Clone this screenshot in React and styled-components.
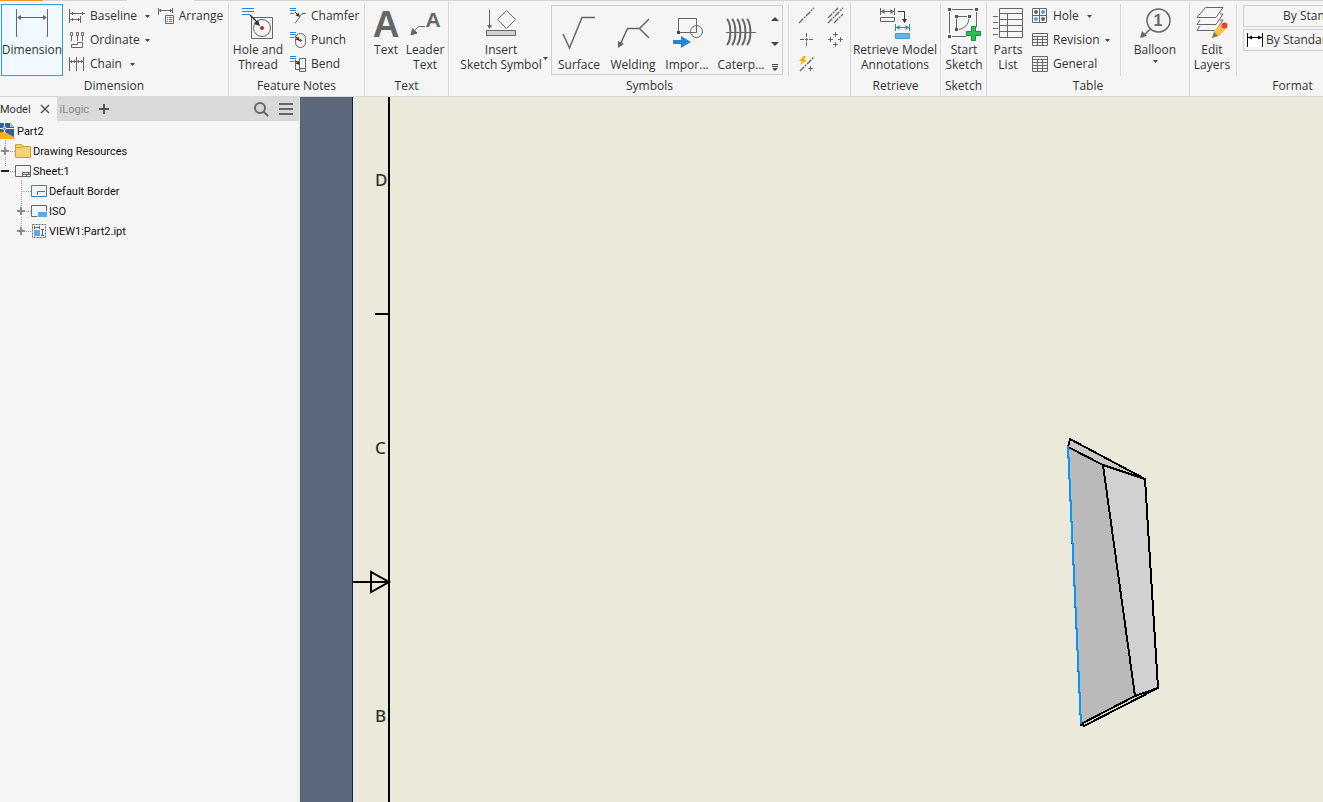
import styled, { createGlobalStyle } from 'styled-components'

function App() {
    return (
        <Window>
            <GlobalStyle />
            <TopStrip><i /><b /></TopStrip>
            <Ribbon />
            <Main>
                <Browser />
                <Workspace>
                    <Sheet />
                </Workspace>
            </Main>
        </Window>
    )
}

function Ribbon() {
    return (
        <RibbonBar>
            <Panel $w={229}>
                <PanelBody $left={1}>
                    <BigButton $w={62} $active>
                        <DimensionIcon />
                        <span>Dimension</span>
                    </BigButton>
                    <Column $left={6}>
                        <SmallButton><BaselineIcon /><span>Baseline</span><Caret /></SmallButton>
                        <SmallButton><OrdinateIcon /><span>Ordinate</span><Caret /></SmallButton>
                        <SmallButton $fit><ChainIcon /><span>Chain</span><Caret /></SmallButton>
                    </Column>
                    <Column $left={8}>
                        <SmallButton><ArrangeIcon /><span>Arrange</span></SmallButton>
                    </Column>
                </PanelBody>
                <PanelTitle>Dimension</PanelTitle>
            </Panel>

            <Panel $w={136}>
                <PanelBody>
                    <BigButton $w={58}>
                        <HoleThreadIcon />
                        <span>Hole and<br />Thread</span>
                    </BigButton>
                    <Column $left={3}>
                        <SmallButton><ChamferIcon /><span>Chamfer</span></SmallButton>
                        <SmallButton><PunchIcon /><span>Punch</span></SmallButton>
                        <SmallButton><BendIcon /><span>Bend</span></SmallButton>
                    </Column>
                </PanelBody>
                <PanelTitle>Feature Notes</PanelTitle>
            </Panel>

            <Panel $w={84}>
                <PanelBody>
                    <BigButton $w={42}>
                        <TextIcon />
                        <span>Text</span>
                    </BigButton>
                    <BigButton $w={36}>
                        <LeaderIcon />
                        <span>Leader<br />Text</span>
                    </BigButton>
                </PanelBody>
                <PanelTitle>Text</PanelTitle>
            </Panel>

            <Panel $w={402}>
                <PanelBody>
                    <SplitButton>
                        <BigButton as="span" $w={80}>
                            <SketchSymbolIcon />
                            <span>Insert<br />Sketch Symbol</span>
                        </BigButton>
                        <Caret />
                    </SplitButton>
                    <Gallery>
                        <GalleryItem><SurfaceIcon /><span>Surface</span></GalleryItem>
                        <GalleryItem><WeldingIcon /><span>Welding</span></GalleryItem>
                        <GalleryItem><ImportIcon /><span>Impor...</span></GalleryItem>
                        <GalleryItem><CaterpillarIcon /><span>Caterp...</span></GalleryItem>
                        <GalleryScroll>
                            <button aria-label="Scroll up"><ScrollCaret viewBox="0 0 8 8"><path d="M0 6h8l-4-4z" /></ScrollCaret></button>
                            <button aria-label="Scroll down"><ScrollCaret viewBox="0 0 8 8"><path d="M0 2h8l-4 4z" /></ScrollCaret></button>
                            <button aria-label="More symbols"><ScrollCaret viewBox="0 0 8 8"><path d="M1 0h6v1H1zM1 2h6v1H1zM1 4h6l-3 3z" /></ScrollCaret></button>
                        </GalleryScroll>
                    </Gallery>
                    <Divider $left={5} />
                    <MarkGrid>
                        <button aria-label="Centerline"><Icon16 viewBox="0 0 16 16"><path d="M0 15 15 0" strokeDasharray="6 1 2 1" strokeWidth="1.3" /></Icon16></button>
                        <button aria-label="Centerline bisector"><Icon16 viewBox="0 0 16 16"><path d="M0 10 10 0M0 15 15 0M6 15 15 6" strokeDasharray="6 1 2 1" strokeWidth="1.3" /></Icon16></button>
                        <button aria-label="Center mark"><Icon16 viewBox="0 0 16 16"><path d="M1 7.5h4M6 7.5h3M10 7.5h4M7.5 1v4M7.5 6v3M7.5 10v4" /></Icon16></button>
                        <button aria-label="Centered pattern"><Icon16 viewBox="0 0 16 16"><path d="M5 2.5h5M7.5 0v5M0 7.5h5M2.5 5v5M10 7.5h5M12.5 5v5M5 12.5h5M7.5 10v5" /></Icon16></button>
                        <button aria-label="Automated centerlines">
                            <Icon16 viewBox="0 0 16 16">
                                <path d="M1 15 15 1" strokeDasharray="6 1 2 1" strokeWidth="1.3" />
                                <path d="M9 12.5h5M11.5 10v5" />
                                <path d="M5 0 0 5h3L1 9 8 4H5L7 0z" fill="#ffa41c" stroke="none" />
                            </Icon16>
                        </button>
                    </MarkGrid>
                </PanelBody>
                <PanelTitle>Symbols</PanelTitle>
            </Panel>

            <Panel $w={90}>
                <PanelBody>
                    <BigButton $w={88}>
                        <RetrieveIcon />
                        <span>Retrieve Model<br />Annotations</span>
                    </BigButton>
                </PanelBody>
                <PanelTitle>Retrieve</PanelTitle>
            </Panel>

            <Panel $w={46}>
                <PanelBody>
                    <BigButton $w={46}>
                        <SketchIcon />
                        <span>Start<br />Sketch</span>
                    </BigButton>
                </PanelBody>
                <PanelTitle>Sketch</PanelTitle>
            </Panel>

            <Panel $w={203}>
                <PanelBody>
                    <BigButton $w={42}>
                        <PartsListIcon />
                        <span>Parts<br />List</span>
                    </BigButton>
                    <Column $left={3}>
                        <SmallButton $fit><HoleTableIcon /><span>Hole</span><Caret /></SmallButton>
                        <SmallButton><RevisionIcon /><span>Revision</span><Caret /></SmallButton>
                        <SmallButton><GeneralIcon /><span>General</span></SmallButton>
                    </Column>
                    <Divider $auto />
                    <BigButton $w={68}>
                        <BalloonIcon />
                        <span>Balloon</span>
                        <Caret />
                    </BigButton>
                </PanelBody>
                <PanelTitle>Table</PanelTitle>
            </Panel>

            <Panel $w={206}>
                <PanelBody>
                    <BigButton $w={44}>
                        <LayersIcon />
                        <span>Edit<br />Layers</span>
                    </BigButton>
                    <Divider $left={2} />
                    <Formats>
                        <Format $pad={39}>
                            <select aria-label="Layer format"><option>By Standard</option></select>
                        </Format>
                        <Format $pad={3}>
                            <StyleIcon />
                            <select aria-label="Dimension style"><option>By Standard</option></select>
                        </Format>
                    </Formats>
                </PanelBody>
                <PanelTitle>Format</PanelTitle>
            </Panel>
        </RibbonBar>
    )
}

function Browser() {
    return (
        <SideBar>
            <Tabs>
                <Tab $active>Model
                    <svg width="10" height="10" viewBox="0 0 10 10"><path d="m1 1 8 8M9 1 1 9" stroke="#555" strokeWidth="1.5" /></svg>
                </Tab>
                <Tab>iLogic</Tab>
                <IconButton aria-label="Add tab">
                    <svg width="10" height="10" viewBox="0 0 10 10"><path d="M0 5h10M5 0v10" stroke="#555" strokeWidth="2" /></svg>
                </IconButton>
                <TabTools>
                    <IconButton aria-label="Search">
                        <svg width="16" height="16" viewBox="0 0 16 16" fill="none" stroke="#666" strokeWidth="2"><circle cx="7" cy="7" r="5" /><path d="m10.500 10.500 4.500 4.500" /></svg>
                    </IconButton>
                    <IconButton aria-label="Menu">
                        <svg width="14" height="14" viewBox="0 0 14 14"><path d="M0 2h14M0 7h14M0 12h14" stroke="#666" strokeWidth="2" /></svg>
                    </IconButton>
                </TabTools>
            </Tabs>
            <Tree>
                <Row $root><PartIcon /><span>Part2</span></Row>
                <Row><Expander mark="plus" line="M5.500 0v20" /><FolderIcon /><span>Drawing Resources</span></Row>
                <Row><Expander mark="minus" line="M5.500 0v8" /><SheetIcon /><span>Sheet:1</span></Row>
                <Row $level={1}><Expander line="M5.500 0v20M5.500 10.500h4" /><BorderIcon /><span>Default Border</span></Row>
                <Row $level={1}><Expander mark="plus" line="M5.500 0v20" /><TitleBlockIcon /><span>ISO</span></Row>
                <Row $level={1}><Expander mark="plus" line="M5.500 0v6" /><ViewIcon /><span>VIEW1:Part2.ipt</span></Row>
            </Tree>
        </SideBar>
    )
}

function Expander({ mark, line }) {
    return (
        <svg width="15" height="20" viewBox="0 0 15 20" fill="none">
            <path d={line} stroke="#999" strokeDasharray="1 1" />
            <path d="M10 10.500h5" stroke="#999" strokeDasharray="1 1" />
            {mark && <path d="M1 5h8v10H1z" fill="#f5f5f5" />}
            {mark === 'plus' && <path d="M1 10h8M5 6v8" stroke="#8a8a8a" strokeWidth="2" />}
            {mark === 'minus' && <path d="M1 10h8" stroke="#222" strokeWidth="2" />}
        </svg>
    )
}

// Drawing sheet: zone border on the left and the projected view of the part
function Sheet() {
    return (
        <Paper>
            <svg width="100%" height="100%" fill="none" stroke="#000" strokeWidth="2">
                <line x1="36" y1="0" x2="36" y2="100%" />
                <path d="M22 217h14M0 485h36M18 475v20l18-10z" />
                <g fill="#333" stroke="none">
                    <text x="22" y="89">D</text>
                    <text x="22" y="357">C</text>
                    <text x="22" y="625">B</text>
                </g>
                <g strokeLinejoin="round" shapeRendering="crispEdges">
                    <path d="M715 350 717 342 792 382 750 368z" fill="#c9c9c9" />
                    <path d="M715 350 750 368 782 599 728 628z" fill="#bababa" />
                    <path d="M750 368 792 382 805 591 782 599z" fill="#d1d1d1" />
                    <path d="M728 627 782 599 805 591 731 629z" fill="#d1d1d1" />
                    <path d="M715 349 728 627" stroke="#0696ff" />
                </g>
            </svg>
        </Paper>
    )
}

/* ---------- icons ---------- */

const DimensionIcon = () => (
    <Icon32 viewBox="0 0 32 32">
        <path d="M.5 1v28M31.500 1v28M2 9.500h28" />
        <path d="M1 9.500 5 7v5zM31 9.500 27 7v5z" fill="#666" stroke="none" />
    </Icon32>
)

const BaselineIcon = () => (
    <Icon16 viewBox="0 0 16 16">
        <path d="M.5 1v14M1 5.500h15M1 11.500h11M11.500 8v7M3.500 4v3M3.500 10v3M13.500 4v3M9.500 10v3" />
    </Icon16>
)

const OrdinateIcon = () => (
    <Icon16 viewBox="0 0 16 16">
        <path d="M1.500.5h2v3h-2zM7.500.5h2v3h-2zM12.500.5h2v3h-2zM2.500 4v5M8.500 4v5M13.500 4v5M2.500 15.500v-3h6v-2h5v5z" />
    </Icon16>
)

const ChainIcon = () => (
    <Icon16 viewBox="0 0 16 16">
        <path d="M.5 1v14M7.500 1v14M14.500 1v14M1 5.500h13M2.500 4v3M5.500 4v3M9.500 4v3M12.500 4v3" />
    </Icon16>
)

const ArrangeIcon = () => (
    <Icon16 viewBox="0 0 16 16">
        <path d="M.5 0v7M14.500 0v5M1 2.500h13M2.500 1v3M12.500 1v3M7.500 7.500h8v8h-8z" />
        <path d="M9 9.500h1M11 9.500h3M9 11.500h1M11 11.500h3M9 13.500h1M11 13.500h3" stroke="#1e88e0" />
    </Icon16>
)

const HoleThreadIcon = () => (
    <Icon32 viewBox="0 0 32 32">
        <path d="M0 .5h12M0 3.500h12M0 6.500h8" stroke="#1e88e0" />
        <path d="M9.500 9.500h21v21h-21z" />
        <circle cx="20" cy="20" r="8.500" />
        <circle cx="20" cy="20" r="2" fill="#c62828" stroke="none" />
        <path d="m8 7 7 7" stroke="#333" strokeWidth="1.5" />
        <path d="m18 18-6-2 4-4z" fill="#333" stroke="none" />
    </Icon32>
)

const NoteLines = () => (
    <>
        <path d="M0 .5h6M0 2.500h6M0 5.500h4" stroke="#1e88e0" />
        <path d="m5 4 3 3" stroke="#333" />
        <path d="M10 9 5.500 7.500 8.500 4.500z" fill="#333" stroke="none" />
    </>
)

const ChamferIcon = () => (
    <Icon16 viewBox="0 0 16 16">
        <path d="M16 5.500h-4L5 15.500" />
        <NoteLines />
    </Icon16>
)

const PunchIcon = () => (
    <Icon16 viewBox="0 0 16 16">
        <rect x="5.500" y="1.500" width="10" height="14" rx="5" />
        <path d="M9 8.500h3M10.500 7v3" stroke="#e02020" />
        <NoteLines />
    </Icon16>
)

const BendIcon = () => (
    <Icon16 viewBox="0 0 16 16">
        <path d="M5.500 4.500v9h5M9.500 2.500h6v13h-6zM10 12.500h6" />
        <NoteLines />
    </Icon16>
)

const TextIcon = () => (
    <Icon32 viewBox="0 0 32 32">
        <text x="16" y="29" fontSize="37" textAnchor="middle">A</text>
    </Icon32>
)

const LeaderIcon = () => (
    <Icon32 viewBox="0 0 32 32">
        <text x="24" y="19" fontSize="21" textAnchor="middle">A</text>
        <path d="M16 18.500H9.500L4 24" />
        <path d="M2 27l1.500-6.500L8 25z" fill="#666" />
    </Icon32>
)

const SketchSymbolIcon = () => (
    <Icon32 viewBox="0 0 32 32">
        <path d="M4.500 2v15M21.500 2.500l9 9-9 9-9-9z" />
        <path d="M4.500 21 2 17h5z" fill="#666" stroke="none" />
        <path d="M1.500 22.500h29v5h-29z" fill="#d2d2d2" />
    </Icon32>
)

const SurfaceIcon = () => (
    <Icon32 viewBox="0 0 32 32">
        <path d="m0 18 6.500 14L19 1.500h13" strokeWidth="1.500" />
    </Icon32>
)

const WeldingIcon = () => (
    <Icon32 viewBox="0 0 32 32">
        <path d="m3 29 7.500-16.500h12L32 3M22.500 12.500 32 22" strokeWidth="1.500" />
        <path d="M1 32v-7l6 3z" fill="#666" stroke="none" />
    </Icon32>
)

const ImportIcon = () => (
    <Icon32 viewBox="0 0 32 32">
        <path d="M7.500 2.500h18v14h-18z" />
        <circle cx="25.500" cy="15.500" r="6" />
        <path d="M6 15h3v3H6z" fill="#444" stroke="none" />
        <path d="M2 24h8v-4l10 6-10 6v-4H2z" fill="#1e88e0" stroke="none" />
    </Icon32>
)

const CaterpillarIcon = () => (
    <Icon32 viewBox="0 0 32 32">
        <path d="M1 16.500h30" />
        <path d="M2 3c4 4 5 20 0 26M7 3c4 4 5 20 0 26M12 3c4 4 5 20 0 26M17 3c4 4 5 20 0 26M22 3c4 4 5 20 0 26" strokeWidth="2" />
    </Icon32>
)

const RetrieveIcon = () => (
    <Icon32 viewBox="0 0 32 32">
        <path d="M1.500 0v7M15.500 0v7M2 3.500h13M1.500 9.500h14v4h-14z" />
        <path d="M2 3.500 5.500 1v5zM15 3.500 11.500 1v5z" fill="#666" stroke="none" />
        <path d="M19 3.500h6.500V12" stroke="#333" />
        <path d="M25.500 15 23 11h5z" fill="#333" stroke="none" />
        <path d="M16.500 16v7M30.500 16v7M17 19.500h13" stroke="#1e88e0" />
        <path d="m17 19.500 3.500-2.500v5zM30 19.500 26.500 17v5z" fill="#1e88e0" stroke="none" />
        <path d="M16.500 25.500h14v5h-14z" fill="#6cb2e8" stroke="#3f9ade" />
    </Icon32>
)

const SketchIcon = () => (
    <Icon32 viewBox="0 0 32 32">
        <path d="M4 1.500h21M1.500 4v21M28.500 4v15M4 28.500h14M10 8.500h9M8.500 11v9M21 11c-1 6-4 9-10 10.500" />
        <path d="M0 0h3v3H0zM27 0h3v3h-3zM0 27h3v3H0zM7 7h3v3H7zM20 7h3v3h-3zM7 20h3v3H7z" fill="#555" stroke="none" />
        <path d="M23.500 18.500h4v5h5v4h-5v5h-4v-5h-5v-4h5z" fill="#2dbd57" stroke="#16913b" />
    </Icon32>
)

const PartsListIcon = () => (
    <Icon32 viewBox="0 0 32 32">
        <path d="M7.500.5h23v29h-23zM7.500 5.500h23M7.500 11.500h23M7.500 17.500h23M7.500 23.500h23M15.500 5.500v24M1 8.500h5M1 14.500h5M1 20.500h5M1 26.500h5" />
    </Icon32>
)

const HoleTableIcon = () => (
    <Icon16 viewBox="0 0 16 16">
        <path d="M.5.5h14v14H.5zM7.500.5v14M.5 7.500h14" />
        <g stroke="none">
            <circle cx="4" cy="4" r="2" fill="#666" /><circle cx="11" cy="4" r="2" fill="#4da3e0" />
            <circle cx="4" cy="11" r="2" fill="#4da3e0" /><circle cx="11" cy="11" r="2" fill="#666" />
        </g>
    </Icon16>
)

const RevisionIcon = () => (
    <Icon16 viewBox="0 0 16 16">
        <path d="M.5 1.500h15v12H.5zM.5 4.500h15M.5 7.500h15M.5 10.500h15M5.500 4.500v9M10.500 4.500v9" />
    </Icon16>
)

const GeneralIcon = () => (
    <Icon16 viewBox="0 0 16 16">
        <path d="M.5.5h15v15H.5zM.5 3.500h15M.5 6.500h15M.5 9.500h15M.5 12.500h15M5.500 3.500v12M10.500 3.500v12" />
    </Icon16>
)

const BalloonIcon = () => (
    <Icon32 viewBox="0 0 32 32">
        <circle cx="19.500" cy="12.500" r="11.500" strokeWidth="1.500" />
        <text x="19" y="18" fontSize="16" textAnchor="middle">1</text>
        <path d="M11.500 21 5 27" strokeWidth="1.500" />
        <path d="m1 30 2-7 5 5z" fill="#666" stroke="none" />
    </Icon32>
)

const LayersIcon = () => (
    <Icon32 viewBox="0 0 32 32">
        <path d="M9.500-.5H27l-7 10H1z" />
        <path d="M4 12 1 16.500h19L27 6h-3M4 18 1 22.500h19L27 12h-3" />
        <path d="m16 30 2-7 8-8 5 5-8 8z" fill="#fbc04a" stroke="none" />
        <path d="m16 30 2-6 4 4z" fill="#777" stroke="none" />
        <circle cx="28.500" cy="17.500" r="3" fill="#ef3a3a" stroke="none" />
    </Icon32>
)

const StyleIcon = () => (
    <Icon16 viewBox="0 0 16 16">
        <path d="M1 2h15v13H1z" fill="#fff" stroke="none" />
        <path d="M.5 1v14M15.500 1v14M1 5.500h14" stroke="#000" />
        <path d="m1 5.500 4-2v4zM15 5.500l-4-2v4z" fill="#000" stroke="none" />
    </Icon16>
)

const PartIcon = () => (
    <svg width="14" height="16" viewBox="0 0 14 16">
        <path d="M0 0h10l4 4v12H0z" fill="#2763a5" />
        <path d="M10 0l4 4h-4z" fill="#a9c6e4" />
        <path d="M0 9h5l9 5v2H0z" fill="#fbb01c" />
        <path d="M0 5.500h14M4.500 0v10" stroke="#fff" />
        <circle cx="4.500" cy="5.500" r="1.500" fill="#2763a5" stroke="#fff" />
    </svg>
)

const FolderIcon = () => (
    <Icon16 viewBox="0 0 16 16">
        <path d="M.5 1.500h6l1 2h8v11H.5z" fill="#f6d26b" stroke="#c9a03c" />
        <path d="M1 4.500h5.500l1-1" stroke="#c9a03c" />
    </Icon16>
)

const SheetIcon = () => (
    <Icon16 viewBox="0 0 16 16">
        <path d="M.5 2.500h15v11H.5zM7.500 13.500v-4h8M7.500 11.500h8M11.500 11.500v2M13.500 9.500v2" />
    </Icon16>
)

const BorderIcon = () => (
    <Icon16 viewBox="0 0 16 16">
        <path d="M.5 2.500h15v11H.5z" stroke="#1e88e0" />
        <path d="M6.500 12V8.500H14" />
    </Icon16>
)

const TitleBlockIcon = () => (
    <Icon16 viewBox="0 0 16 16">
        <path d="M6 13.500H.5v-11h15V8" />
        <path d="M7 9h9v5H7z" fill="#5aabe8" stroke="none" />
    </Icon16>
)

const ViewIcon = () => (
    <Icon16 viewBox="0 0 16 16">
        <path d="M1.500 1.500h13v13h-13z" strokeDasharray="2 1" />
        <path d="M3 7h6v6H3z" fill="#5aabe8" stroke="none" />
        <path d="M4 4.500h5M3.500 3v3M8.500 3v3M11.500 7v6M10 6.500h3M10 12.500h3" />
    </Icon16>
)

/* ---------- styles ---------- */

const GlobalStyle = createGlobalStyle`
    * {
        box-sizing: border-box;
    }
    body {
        margin: 0;
        overflow: hidden;
        background: #f5f5f5;
        color: #333;
        font: 12px/15px "Open Sans", "Noto Sans", sans-serif;
    }
    button, select {
        margin: 0;
        padding: 0;
        border: 0;
        background: none;
        color: inherit;
        font: inherit;
    }
    svg {
        display: block;
        flex: none;
    }
`

const Window = styled.div`
    display: flex;
    flex-direction: column;
    height: 100vh;
`

const TopStrip = styled.div`
    display: flex;
    flex: none;
    height: 1px;
    background: #d4d4d4;
    i {
        width: 43px;
        margin-right: 84px;
        background: #f7941d;
    }
    b {
        width: 67px;
        background: #f5f5f5;
    }
`

const RibbonBar = styled.header`
    display: flex;
    flex: none;
    padding-top: 1px;
    border-bottom: 1px solid #d9d9d9;
    overflow: hidden;
`

const Panel = styled.section`
    display: flex;
    flex-direction: column;
    flex: none;
    width: ${p => p.$w}px;
    padding: 2px 0 3px;
    border-right: 1px solid #d9d9d9;
`

const PanelBody = styled.div`
    display: flex;
    height: 72px;
    padding-left: ${p => p.$left || 0}px;
`

const PanelTitle = styled.div`
    padding-top: 2px;
    text-align: center;
`

const BigButton = styled.button`
    display: flex;
    flex-direction: column;
    align-items: center;
    flex: none;
    width: ${p => p.$w}px;
    padding: ${p => p.$active ? 3 : 4}px 0 0;
    border: ${p => p.$active ? '1px solid #2ba3dc' : 0};
    background: ${p => p.$active ? '#eff9ff' : 'none'};
    text-align: center;
    white-space: nowrap;
    > span {
        padding-top: 2px;
    }
    > svg:last-child {
        margin: 2px 0 0;
    }
`

const SplitButton = styled.button`
    display: flex;
    width: 102px;
    padding-left: 12px;
    > svg {
        align-self: center;
        margin: 36px 0 0 2px;
    }
`

const Column = styled.div`
    display: flex;
    flex-direction: column;
    margin-left: ${p => p.$left}px;
`

const SmallButton = styled.button`
    display: flex;
    align-items: center;
    align-self: ${p => p.$fit ? 'flex-start' : 'stretch'};
    height: 24px;
    gap: 5px;
    white-space: nowrap;
    > span {
        padding-bottom: 2px;
    }
    > svg:nth-child(3) {
        margin-left: auto;
        padding-left: ${p => p.$fit ? 3 : 0}px;
        box-sizing: content-box;
    }
`

const CaretSvg = styled.svg`
    width: 5px;
    height: 5px;
    fill: #444;
`

const Caret = () => <CaretSvg viewBox="0 0 5 5"><path d="M0 1h5L2.500 4z" /></CaretSvg>

const Icon32 = styled.svg`
    width: 32px;
    height: 32px;
    overflow: visible;
    fill: none;
    stroke: #666;
    text {
        fill: #666;
        stroke: none;
        font-family: "Liberation Sans", sans-serif;
        font-weight: 700;
    }
`

const Icon16 = styled(Icon32)`
    width: 16px;
    height: 16px;
`

const Divider = styled.div`
    flex: none;
    width: 1px;
    margin-left: ${p => p.$auto ? 'auto' : `${p.$left}px`};
    background: #d9d9d9;
`

const Gallery = styled.div`
    display: flex;
    flex: none;
    margin: 1px 0;
    border: 1px solid #cfcfcf;
`

const GalleryItem = styled.button`
    display: flex;
    flex-direction: column;
    align-items: center;
    justify-content: flex-end;
    gap: 9px;
    width: 54px;
    padding-bottom: 2px;
`

const GalleryScroll = styled.div`
    display: flex;
    flex-direction: column;
    justify-content: space-between;
    width: 14px;
    padding: 9px 3px 2px;
`

const ScrollCaret = styled.svg`
    width: 8px;
    height: 8px;
    fill: #444;
`

const MarkGrid = styled.div`
    display: grid;
    grid-template-columns: 16px 16px;
    grid-auto-rows: 24px;
    column-gap: 13px;
    margin-left: 10px;
    align-items: center;
`

const Formats = styled.div`
    display: flex;
    flex-direction: column;
    flex: 1;
    gap: 2px;
    padding: 1px 0 0 6px;
`

const Format = styled.label`
    display: flex;
    align-items: center;
    height: 22px;
    gap: 3px;
    padding-left: ${p => p.$pad}px;
    border: 1px solid #cfcfcf;
    select {
        flex: 1;
        padding-bottom: 2px;
        appearance: none;
    }
`

const Main = styled.div`
    display: flex;
    flex: 1;
    min-height: 0;
`

const SideBar = styled.aside`
    flex: none;
    width: 300px;
    border-right: 1px solid #e4e4e4;
    font-family: Roboto, "Open Sans", sans-serif;
    font-size: 11px;
    color: #111;
`

const Tabs = styled.div`
    display: flex;
    height: 24px;
    padding-right: 1px;
    background: #d9d9d9;
`

const Tab = styled.button`
    display: flex;
    align-items: center;
    gap: 9px;
    padding: 0 ${p => p.$active ? '7px 0 0' : '5px 0 3px'};
    background: ${p => p.$active ? '#f5f5f5' : 'none'};
    color: ${p => p.$active ? '#333' : '#888'};
`

const IconButton = styled.button`
    display: flex;
    align-items: center;
    padding: 0 5px;
`

const TabTools = styled.div`
    display: flex;
    margin-left: auto;
`

const Tree = styled.ul`
    margin: 0;
    padding: 0;
    list-style: none;
`

const Row = styled.li`
    display: flex;
    align-items: center;
    height: 20px;
    padding-left: ${p => (p.$level || 0) * 16}px;
    span {
        padding-left: ${p => p.$root ? 3 : 2}px;
    }
`

const Workspace = styled.main`
    display: flex;
    flex: 1;
    min-width: 0;
    padding-left: 52px;
    background: #5b687b;
`

const Paper = styled.div`
    flex: 1;
    min-width: 0;
    border-left: 1px solid #1d1a55;
    background: #ebe9da;
    overflow: hidden;
    text {
        font: 500 17px "Noto Sans", sans-serif;
    }
`

export default App
